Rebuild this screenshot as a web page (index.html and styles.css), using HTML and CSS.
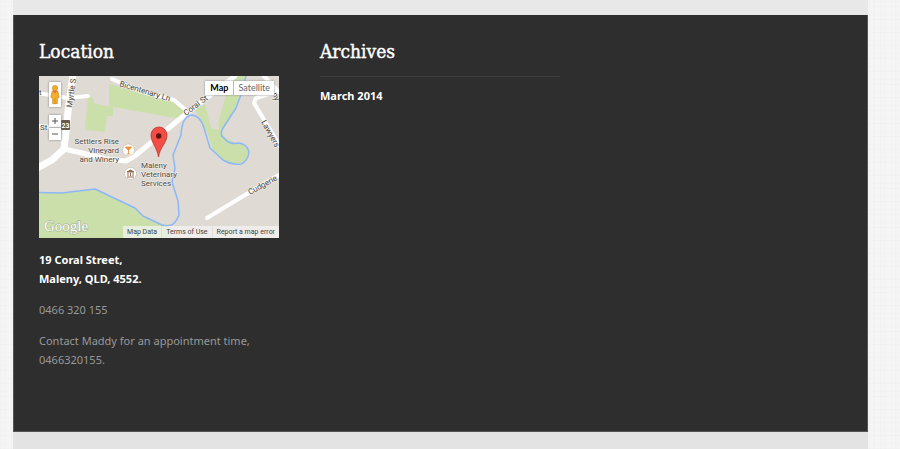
FILE: index.html
```html
<!DOCTYPE html>
<html lang="en">
<head>
<meta charset="utf-8">
<title>Location and archives</title>
<link rel="stylesheet" href="styles.css">
</head>
<body>
<div class="page">
  <footer class="footer">
    <section class="widget">
      <h2>Location</h2>
      <div class="map">
        <svg class="map-canvas" viewBox="39 76 240 162" role="img" aria-label="Map of Maleny">
          <rect x="39" y="76" width="240" height="162" fill="#dfdad4"/>
          <g fill="#cbdfaa">
            <path d="M39 192.500L62 193L95 189L135 208L143 216L170 227L170 238H39Z"/>
            <path d="M88 97L92 97L94 103L109 107V84L170 100L187 113L181 119L113 107V116H107L105 132L85 130L87 106Z"/>
            <path d="M195 110L205 104L211 128L220 130L240 96L226 114L222 132L224 137L235 143L246 145L249 153L244 162L235 164L225 161L213 150L207 132Z"/>
            <path d="M231 76H246L240 98L221 134L218 124Z"/>
          </g>
          <g fill="none" stroke="#fff" stroke-linejoin="round" stroke-linecap="round">
            <path d="M73 74L68 112L64 149L52 160L37 168" stroke-width="7"/>
            <path d="M37 93L68 98L88 96" stroke-width="4"/>
            <path d="M37 126L68 128" stroke-width="4"/>
            <path d="M64 149L82 153L106 159L126 161L136 155L187 113L235 76" stroke-width="5"/>
            <path d="M112 79L139 91L174 100L187 111" stroke-width="4"/>
            <path d="M262 74L279 92M276 92L256 98L254 103L281 148" stroke-width="4"/>
            <path d="M207 218L250 192L281 174" stroke-width="4"/>
          </g>
          <g fill="none" stroke="#8cb8f8" stroke-width="1.500" stroke-linejoin="round">
            <path d="M39 192.500L62 193L95 189L135 208L143 216L162 225Q174 229 179 215L178 201L172 182L175 168L173 155L181 135Q182 117 191 115Q200 115 204 128L210 148L223 160Q231 165 241 164Q248 161 249 152Q247 144 239 143Q229 145 224 138Q219 135 223 128L236 108L242 92L246 76"/>
          </g>
          <g class="road-label">
            <text transform="translate(72 108) rotate(-82)">Myrtle S</text>
            <text transform="translate(119 86) rotate(17)">Bicentenary Ln</text>
            <text transform="translate(186 116) rotate(-37)">Coral St</text>
            <text transform="translate(261 122) rotate(61)">Lawyers</text>
            <text transform="translate(250 195) rotate(-29)">Cudgerie</text>
            <text x="40" y="130">St</text>
            <text x="39" y="95">t</text>
            <text transform="translate(272 94) rotate(65)">ny</text>
          </g>
          <g class="place-label">
            <g text-anchor="end">
              <text x="119" y="144">Settlers Rise</text>
              <text x="119" y="153">Vineyard</text>
              <text x="119" y="162">and Winery</text>
            </g>
            <text x="141" y="168">Maleny</text>
            <text x="141" y="177">Veterinary</text>
            <text x="141" y="186">Services</text>
          </g>
          <rect x="61" y="120" width="9" height="10" rx="1" fill="#665948"/>
          <text x="65.500" y="128" class="route">23</text>
          <circle cx="128.500" cy="150" r="6" fill="#fff" stroke="#c3b6a6" stroke-width=".6"/>
          <path d="M125.500 147H131.500L128.500 150.500ZM128.500 150V154M126.500 154H130.500" fill="#f39532" stroke="#e7892a" stroke-width=".8"/>
          <circle cx="130.500" cy="173.500" r="6" fill="#fff" stroke="#c3b6a6" stroke-width=".6"/>
          <path d="M127 172L130.500 170L134 172ZM128 173V176M130.500 173V176M133 173V176M127 177H134" fill="#8c6950" stroke="#8c6950" stroke-width="1"/>
          <path d="M158.500 157C157 147 151 143 151 135A8 8 0 0 1 167 135C167 143 160 147 158.500 157Z" fill="#f34e46" stroke="#b52b27" stroke-width=".7"/>
          <circle cx="158.700" cy="136" r="2.700" fill="#60110d"/>
          <text x="44" y="231" class="brand">Google</text>
        </svg>
        <button class="map-button pegman" type="button" aria-label="Street view">
          <svg viewBox="0 0 13 24" aria-hidden="true"><g fill="#f5ae28" stroke="#c98316" stroke-width=".7"><path d="M3.500 8.500Q6.500 6.500 9.500 8.500L11 15L9 16V22H4V16L2 15Z"/><circle cx="6.500" cy="5" r="2.800"/></g><path d="M4 8L6.500 11L9 8Z" fill="#ec6a5c"/><path d="M6.500 16V22" stroke="#c98316" stroke-width=".7"/></svg>
        </button>
        <div class="zoom">
          <button class="map-button" type="button" aria-label="Zoom in"><svg viewBox="0 0 12 12" aria-hidden="true"><path d="M3 6H9M6 3V9"/></svg></button>
          <button class="map-button" type="button" aria-label="Zoom out"><svg viewBox="0 0 12 12" aria-hidden="true"><path d="M3 6H9"/></svg></button>
        </div>
        <div class="map-types">
          <button class="map-type active" type="button">Map</button>
          <button class="map-type" type="button">Satellite</button>
        </div>
        <div class="map-links">
          <a href="#">Map Data</a>
          <a href="#">Terms of Use</a>
          <a href="#">Report a map error</a>
        </div>
      </div>
      <p class="address">19 Coral Street,<br>Maleny, QLD, 4552.</p>
      <p>0466 320 155</p>
      <p>Contact Maddy for an appointment time, 0466320155.</p>
    </section>
    <section class="widget">
      <h2>Archives</h2>
      <ul class="archive-list">
        <li><a href="#">March 2014</a></li>
      </ul>
    </section>
  </footer>
</div>
</body>
</html>
```
FILE: styles.css
```css
* { box-sizing: border-box; }

body {
  margin: 0;
  background-color: #f5f5f5;
  background-image:
    repeating-linear-gradient(90deg, rgba(0, 0, 0, 0.01) 0 1px, transparent 1px 4px, rgba(0, 0, 0, 0.008) 4px 6px, transparent 6px 11px),
    repeating-linear-gradient(0deg, rgba(0, 0, 0, 0.01) 0 1px, transparent 1px 5px, rgba(0, 0, 0, 0.008) 5px 6px, transparent 6px 13px);
  font-family: "Noto Sans", "Open Sans", sans-serif;
  font-size: 11px;
  line-height: 19px;
  color: #999;
}

.page {
  min-height: 100vh;
  margin: 0 32px 0 13px;
  padding: 15px 0 17px;
  background: linear-gradient(#e8e8e8, #e3e3e3);
}

.footer {
  display: grid;
  grid-template-columns: repeat(3, minmax(0, 240px));
  gap: 41px;
  padding: 24px 25px 62px;
  background: #2e2e2e;
  border: 1px solid #555;
  border-top: 0;
}

h2 {
  margin: 0 0 12px;
  font-family: "DejaVu Serif Condensed", "DejaVu Serif", serif;
  font-size: 19px;
  font-weight: 400;
  line-height: 25px;
  color: #fff;
  -webkit-text-stroke: 0.4px #fff;
}

p { margin: 12px 0 0; }

.address {
  font-weight: 700;
  color: #fff;
}

.archive-list {
  margin: 0;
  padding: 9px 0 0;
  border-top: 1px solid #3d3d3d;
  list-style: none;
}

.archive-list a {
  font-weight: 700;
  color: #fff;
  text-decoration: none;
}

.map {
  position: relative;
  overflow: hidden;
  font-family: Roboto, sans-serif;
}

.map-canvas {
  display: block;
  width: 100%;
}

.road-label,
.place-label {
  font-size: 8px;
  fill: #4c4842;
  stroke: #f5f2ee;
  stroke-width: 1px;
  paint-order: stroke;
}

.route {
  font-size: 7px;
  font-weight: 700;
  fill: #fff;
  text-anchor: middle;
}

.brand {
  font-family: "Liberation Serif", serif;
  font-size: 15px;
  fill: #fff;
  stroke: #a3ad91;
  stroke-width: 1px;
  paint-order: stroke;
}

.map-button {
  display: block;
  width: 12px;
  height: 12px;
  padding: 0;
  background: #fff;
  border: 0;
  box-shadow: 0 0 2px #777;
}

.map-button svg {
  display: block;
  width: 100%;
  height: 100%;
  fill: none;
  stroke: #555;
}

.map .pegman {
  position: absolute;
  top: 6px;
  left: 10px;
  height: 25px;
}

.pegman svg { stroke: none; }

.zoom {
  position: absolute;
  top: 39px;
  left: 10px;
  display: grid;
  gap: 1px;
}

.map-types {
  position: absolute;
  top: 5px;
  right: 5px;
  display: flex;
  box-shadow: 0 0 2px #888;
}

.map-type {
  height: 14px;
  padding: 0 4px;
  background: #fff;
  border: 0;
  border-left: 1px solid #bbb;
  font-family: Lato, sans-serif;
  font-size: 9px;
  line-height: 14px;
  color: #666;
}

.map-type.active {
  padding: 0 5px;
  border-left: 0;
  font-weight: 700;
  color: #000;
}

.map-links {
  position: absolute;
  right: 0;
  bottom: 0;
  display: flex;
  background: rgba(245, 245, 245, 0.7);
}

.map-links a {
  padding: 0 4px;
  font-size: 7px;
  line-height: 12px;
  color: #444;
  text-decoration: none;
}

.map-links a + a { border-left: 1px solid #ddd; }
```
